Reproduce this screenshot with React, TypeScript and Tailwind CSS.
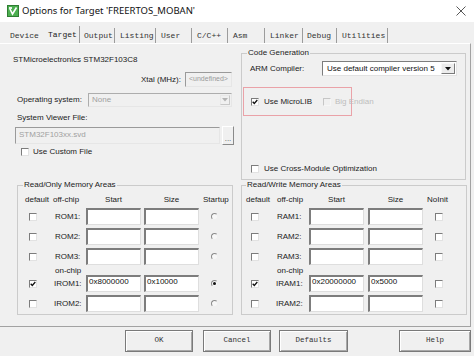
import React from "react";

const tabs = [
  { label: "Device", cls: "ml-[4px] w-[38px] pl-[6px]" },
  { label: "Target", cls: "w-[38px] pl-[6px] border-r", active: true },
  { label: "Output", cls: "w-[35px] pl-[4px] border-r" },
  { label: "Listing", cls: "w-[41px] pl-[5px] border-r" },
  { label: "User", cls: "w-[36px] pl-[5px] border-r" },
  { label: "C/C++", cls: "w-[36px] pl-[5px] border-r" },
  { label: "Asm", cls: "w-[37px] pl-[5px] border-r" },
  { label: "Linker", cls: "w-[38px] pl-[5px] border-r" },
  { label: "Debug", cls: "w-[34px] pl-[4px] border-r" },
  { label: "Utilities", cls: "w-[51px] pl-[5px] border-r" },
];

const romRows = [
  { name: "ROM1:", start: "", size: "", def: false, on: false },
  { name: "ROM2:", start: "", size: "", def: false, on: false },
  { name: "ROM3:", start: "", size: "", def: false, on: false },
];
const iromRows = [
  { name: "IROM1:", start: "0x8000000", size: "0x10000", def: true, on: true },
  { name: "IROM2:", start: "", size: "", def: false, on: false },
];
const ramRows = [
  { name: "RAM1:", start: "", size: "", def: false },
  { name: "RAM2:", start: "", size: "", def: false },
  { name: "RAM3:", start: "", size: "", def: false },
];
const iramRows = [
  { name: "IRAM1:", start: "0x20000000", size: "0x5000", def: true },
  { name: "IRAM2:", start: "", size: "", def: false },
];

function CheckBox({ checked, disabled }: { checked?: boolean; disabled?: boolean }) {
  return (
    <span
      className={
        disabled
          ? "flex h-[8px] w-[8px] shrink-0 border border-[#c6c6c6] border-r-[#f6f6f6] border-b-[#f6f6f6] bg-[#f0f0f0]"
          : "flex h-[8px] w-[8px] shrink-0 items-center justify-center border border-[#7c7c7c] border-r-[#e2e2e2] border-b-[#e2e2e2] bg-white"
      }
    >
      {checked && (
        <svg width="6" height="6" viewBox="0 0 6 6">
          <path d="M0.7 2.7 L2.3 4.5 L5.3 1" fill="none" stroke="#111" strokeWidth="1.3" />
        </svg>
      )}
    </span>
  );
}

function Radio({ on }: { on?: boolean }) {
  return (
    <span className="flex h-[7px] w-[7px] items-center justify-center rounded-full border border-[#8a8a8a] border-r-[#f0f0f0] border-b-[#f0f0f0] bg-[#f7f7f7]">
      {on && <span className="h-[3px] w-[3px] rounded-full bg-[#111]" />}
    </span>
  );
}

function Field({ value }: { value: string }) {
  return (
    <div className="h-[17px] w-[55px] border border-t-2 border-l-2 border-[#7d7d7d] border-r-[#dedede] border-b-[#dedede] bg-white pl-[1px] leading-[10px] text-[#111]">
      {value}
    </div>
  );
}

function Arrow({ color }: { color: string }) {
  return (
    <svg width="6" height="4" viewBox="0 0 6 4">
      <path d="M0 0 H6 L3 3.5 Z" fill={color} />
    </svg>
  );
}

export default function App() {
  return (
    <div className="flex h-[356px] w-[474px] flex-col overflow-hidden bg-[#f0f0f0] font-['Liberation_Sans',Arial,sans-serif] text-[8px] text-[#1b1b1b]">
      {/* title bar */}
      <div className="flex h-[22px] shrink-0 items-center bg-white pl-[7px]">
        <svg width="12" height="12" viewBox="0 0 12 12">
          <rect x="0" y="0" width="12" height="12" fill="#2f7d32" />
          <rect x="1" y="1" width="10" height="10" fill="#4caf50" />
          <path d="M2.5 3 L5.5 9 L9.5 2.5" fill="none" stroke="#fff" strokeWidth="1.6" />
          <rect x="2" y="2" width="3" height="2" fill="#e8f5e9" />
        </svg>
        <span className="ml-[3px] font-['Noto_Sans',sans-serif] text-[9.5px] text-[#111]">
          Options for Target 'FREERTOS_MOBAN'
        </span>
        <svg className="ml-auto mr-[8px]" width="10" height="10" viewBox="0 0 10 10">
          <path d="M0.5 0.5 L9.5 9.5 M9.5 0.5 L0.5 9.5" stroke="#444" strokeWidth="0.9" />
        </svg>
      </div>

      {/* tabs */}
      <div className="flex h-[21px] shrink-0 items-end font-['Liberation_Mono',monospace] text-[8px] text-[#333]">
        {tabs.map((t) => (
          <div
            key={t.label}
            className={`${t.cls} flex items-end border-[#9c9c9c] leading-[10px] ${
              t.active ? "h-[17px] pb-[3px] text-[#222]" : "h-[15px] pb-[2px]"
            }`}
          >
            {t.label}
          </div>
        ))}
      </div>

      {/* panel */}
      <div className="flex h-[284px] w-[471px] shrink-0 flex-col border-t border-r border-b border-white border-r-[#a2a2a2] border-b-[#a2a2a2]">
        <div className="flex">
          {/* left column */}
          <div className="flex w-[236px] flex-col">
            <div className="pt-[11px] pl-[13px] leading-[10px]">STMicroelectronics STM32F103C8</div>
            <div className="mt-[7px] flex h-[15px] items-center justify-end pr-[4px]">
              <span>Xtal (MHz):</span>
              <div className="ml-[4px] h-[15px] w-[47px] border border-[#9a9a9a] border-r-[#e6e6e6] border-b-[#e6e6e6] pl-[3px] text-[7px] leading-[12px] text-[#9a9a9a]">
                &lt;undefined&gt;
              </div>
            </div>
            <div className="mt-[6px] flex h-[14px] items-center pl-[17px]">
              <span className="w-[71px]">Operating system:</span>
              <div className="flex h-[14px] w-[144px] items-center border border-[#adadad] border-r-[#e6e6e6] border-b-[#e6e6e6] pl-[3px] text-[#a0a0a0]">
                <span>None</span>
                <span className="ml-auto mr-[1px] flex h-[10px] w-[10px] items-center justify-center border border-[#e8e8e8] border-r-[#c8c8c8] border-b-[#c8c8c8]">
                  <Arrow color="#b4b4b4" />
                </span>
              </div>
            </div>
            <div className="mt-[6px] pl-[17px] leading-[10px]">System Viewer File:</div>
            <div className="mt-[3px] flex items-start pl-[15px]">
              <div className="mt-[1px] h-[17px] w-[205px] border border-[#9a9a9a] border-r-[#e6e6e6] border-b-[#e6e6e6] pl-[3px] leading-[14px] text-[#a0a0a0]">
                STM32F103xx.svd
              </div>
              <div className="ml-[2px] flex h-[19px] w-[12px] items-end justify-center border border-white border-r-[#8a8a8a] border-b-[#8a8a8a] pb-[1px] leading-[8px] text-[#555]">
                ...
              </div>
            </div>
            <div className="mt-[2px] flex h-[10px] items-center gap-[4px] pl-[21px]">
              <CheckBox />
              <span>Use Custom File</span>
            </div>
          </div>

          {/* right column */}
          <div className="ml-[5px] pt-[4px]">
            <fieldset className="w-[225px] border border-[#cbcbcb] pb-[5px]">
              <legend className="ml-[5px] px-[1px] leading-[10px]">Code Generation</legend>
              <div className="mt-[3px] flex h-[15px] items-center pl-[8px]">
                <span className="w-[72px]">ARM Compiler:</span>
                <div className="flex h-[15px] w-[135px] items-center border border-[#7d7d7d] border-r-[#e2e2e2] border-b-[#e2e2e2] bg-white pl-[4px] text-[#111]">
                  <span>Use default compiler version 5</span>
                  <span className="ml-auto mr-[1px] flex h-[11px] w-[14px] items-center justify-center border border-[#f8f8f8] border-r-[#7a7a7a] border-b-[#7a7a7a] bg-[#ececec]">
                    <Arrow color="#111" />
                  </span>
                </div>
              </div>
              <div className="mt-[11px] ml-[1px] flex h-[29px] w-[109px] items-center whitespace-nowrap border border-[#eaa2a8] pl-[7px]">
                <CheckBox checked />
                <span className="ml-[5px] w-[59px] shrink-0">Use MicroLIB</span>
                <CheckBox disabled />
                <span className="ml-[4px] shrink-0 text-[#bdbdbd]">Big Endian</span>
              </div>
              <div className="mt-[48px] flex h-[10px] items-center gap-[5px] pl-[9px]">
                <CheckBox />
                <span>Use Cross-Module Optimization</span>
              </div>
            </fieldset>
          </div>
        </div>

        {/* memory areas */}
        <div className="flex">
          <fieldset className="ml-[17px] w-[216px] border border-[#cbcbcb] pb-[2px]">
            <legend className="ml-[5px] px-[1px] leading-[10px]">Read/Only Memory Areas</legend>
            <div className="mt-[5px] flex h-[10px] items-center">
              <span className="w-[34px] pl-[7px]">default</span>
              <span className="w-[34px] pl-[1px]">off-chip</span>
              <span className="w-[55px] text-center">Start</span>
              <span className="ml-[3px] w-[55px] text-center">Size</span>
              <span className="pl-[4px]">Startup</span>
            </div>
            {romRows.map((r) => (
              <div key={r.name} className="mt-[3px] flex h-[17px] items-center">
                <span className="w-[34px] pl-[11px]">
                  <CheckBox checked={r.def} />
                </span>
                <span className="w-[34px] pl-[3px]">{r.name}</span>
                <Field value={r.start} />
                <span className="ml-[3px]">
                  <Field value={r.size} />
                </span>
                <span className="pl-[12px]">
                  <Radio on={r.on} />
                </span>
              </div>
            ))}
            <div className="mt-[1px] h-[9px] pl-[37px] leading-[9px]">on-chip</div>
            {iromRows.map((r, i) => (
              <div key={r.name} className={`flex h-[17px] items-center ${i ? "mt-[3px]" : ""}`}>
                <span className="w-[34px] pl-[11px]">
                  <CheckBox checked={r.def} />
                </span>
                <span className="w-[34px] pl-[2px]">{r.name}</span>
                <Field value={r.start} />
                <span className="ml-[3px]">
                  <Field value={r.size} />
                </span>
                <span className="pl-[12px]">
                  <Radio on={r.on} />
                </span>
              </div>
            ))}
          </fieldset>

          <fieldset className="ml-[8px] w-[226px] border border-[#cbcbcb] pb-[2px]">
            <legend className="ml-[4px] px-[1px] leading-[10px]">Read/Write Memory Areas</legend>
            <div className="mt-[5px] flex h-[10px] items-center">
              <span className="w-[33px] pl-[4px]">default</span>
              <span className="w-[34px] pl-[2px]">off-chip</span>
              <span className="w-[55px] text-center">Start</span>
              <span className="ml-[4px] w-[55px] text-center">Size</span>
              <span className="pl-[4px]">NoInit</span>
            </div>
            {ramRows.map((r) => (
              <div key={r.name} className="mt-[3px] flex h-[17px] items-center">
                <span className="w-[33px] pl-[9px]">
                  <CheckBox checked={r.def} />
                </span>
                <span className="w-[34px] pl-[2px]">{r.name}</span>
                <Field value={r.start} />
                <span className="ml-[4px]">
                  <Field value={r.size} />
                </span>
                <span className="pl-[12px]">
                  <CheckBox />
                </span>
              </div>
            ))}
            <div className="mt-[1px] h-[9px] pl-[35px] leading-[9px]">on-chip</div>
            {iramRows.map((r, i) => (
              <div key={r.name} className={`flex h-[17px] items-center ${i ? "mt-[3px]" : ""}`}>
                <span className="w-[33px] pl-[9px]">
                  <CheckBox checked={r.def} />
                </span>
                <span className="w-[34px] pl-[1px]">{r.name}</span>
                <Field value={r.start} />
                <span className="ml-[4px]">
                  <Field value={r.size} />
                </span>
                <span className="pl-[12px]">
                  <CheckBox />
                </span>
              </div>
            ))}
          </fieldset>
        </div>
      </div>

      {/* buttons */}
      <div className="mt-[3px] flex font-['Liberation_Mono',monospace] text-[7.5px] text-[#333]">
        <button className="ml-[125px] h-[22px] w-[68px] border border-[#7a7a7a] bg-[#f0f0f0] shadow-[inset_1px_1px_#fff,inset_-1px_-1px_#a8a8a8]">OK</button>
        <button className="ml-[10px] h-[22px] w-[68px] border border-[#7a7a7a] bg-[#f0f0f0] shadow-[inset_1px_1px_#fff,inset_-1px_-1px_#a8a8a8]">Cancel</button>
        <button className="ml-[8px] h-[22px] w-[69px] border border-[#7a7a7a] bg-[#f0f0f0] shadow-[inset_1px_1px_#fff,inset_-1px_-1px_#a8a8a8]">Defaults</button>
        <button className="ml-[51px] h-[22px] w-[72px] border border-[#7a7a7a] bg-[#f0f0f0] shadow-[inset_1px_1px_#fff,inset_-1px_-1px_#a8a8a8]">Help</button>
      </div>
    </div>
  );
}
